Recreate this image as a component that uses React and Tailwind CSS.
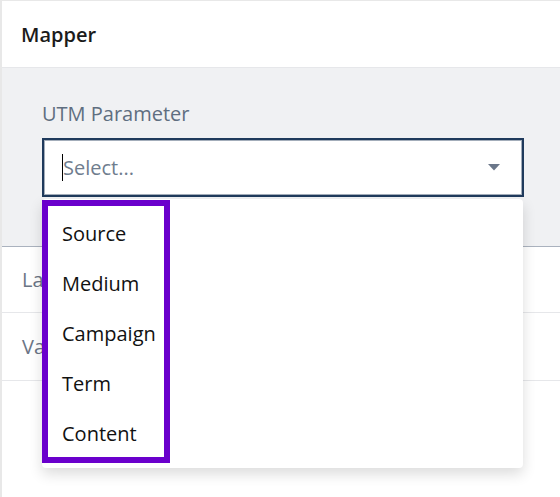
export default function App() {
  const items = ["Source", "Medium", "Campaign", "Term", "Content"];
  return (
    <div
      className="relative w-[560px] h-[497px] overflow-hidden bg-white border-l-2 border-t border-[#e8e8e8]"
      style={{ fontFamily: '"Open Sans", "Noto Sans", sans-serif' }}
    >
      <div className="h-[67px] flex items-center pl-[19px] pt-[1px] border-b border-[#e6e7ea] text-[20px] font-semibold text-[#1b1b1b]">
        Mapper
      </div>
      <div className="bg-[#f0f1f3] pl-[40px] pr-[36px] pt-[32px] pb-[49px] border-b border-[#aab2be]">
        <div className="h-[28px] leading-[28px] text-[20px] text-[#5f6e80]">UTM Parameter</div>
        <div className="mt-[10px] h-[59px] bg-white border-2 border-[#1f3a5c] shadow-[inset_0_0_0_1px_#a3adba] flex items-center pl-[18px] pr-[22px]">
          <span className="w-px h-[27px] bg-black"></span>
          <span className="flex-1 text-[20px] text-[#6f7d8e] leading-[28px]">Select...</span>
          <svg width="12" height="7" viewBox="0 0 12 7">
            <path d="M0 0 L12 0 L6 6.5 Z" fill="#6b778a" />
          </svg>
        </div>
      </div>
      <div className="h-[66px] flex items-center pl-[20px] border-b border-[#e6e7ea] text-[20px] text-[#6b7585]">
        Label
      </div>
      <div className="h-[68px] flex items-center pl-[20px] border-b border-[#e6e7ea] text-[20px] text-[#6b7585]">
        Value
      </div>
      <div className="absolute left-[40px] top-[198px] w-[481px] h-[269px] bg-white rounded-[4px] shadow-[0_6px_14px_rgba(0,0,0,0.14)] pt-[1px]">
        <div className="w-[128px] h-[263px] border-[6px] border-[#6a00cc] pt-[3px] bg-white">
          {items.map((t) => (
            <div key={t} className="h-[50px] flex items-center pl-[14px] text-[20px] text-[#111]">
              {t}
            </div>
          ))}
        </div>
      </div>
    </div>
  );
}
